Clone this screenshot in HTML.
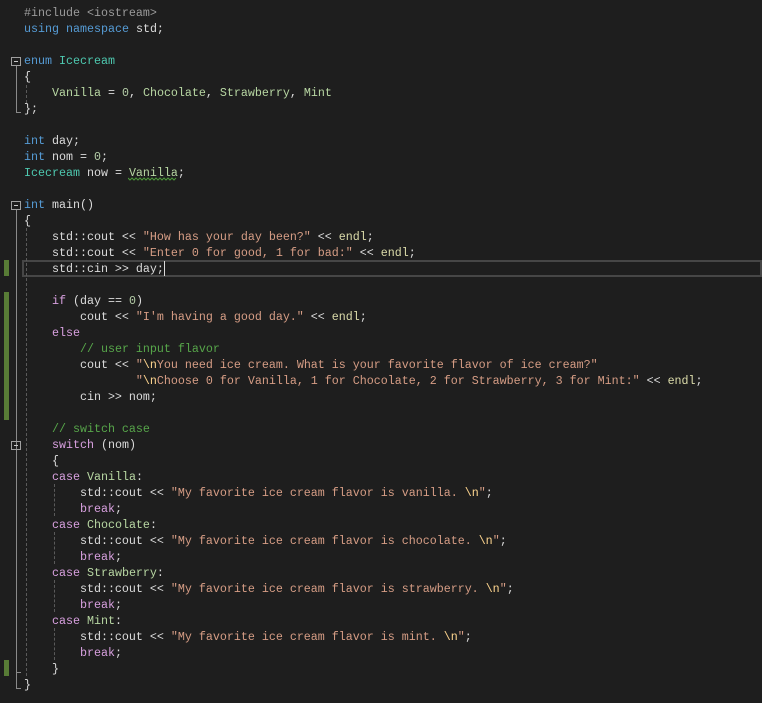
<!DOCTYPE html>
<html><head><meta charset="utf-8"><style>
html,body{margin:0;padding:0;background:#1e1e1e;width:762px;height:703px;overflow:hidden;position:relative}
.l{position:absolute;left:24px;height:16px;line-height:16px;white-space:pre;font-family:"Liberation Mono",monospace;font-size:11.67px;color:#dcdcdc;margin-top:1px}
.k{color:#569cd6}.t{color:#4ec9b0}.s{color:#d69d85}.c{color:#57a64a}.p{color:#d8a0df}.e{color:#b8d7a3}.n{color:#b5cea8}.g{color:#9b9b9b}.f{color:#dcdcaa}.x{color:#ffd68f}
.bar{position:absolute;left:4px;width:5px;background:#587c36}
.box{position:absolute;left:11px;width:10px;height:9px;border:1px solid #a0a0a0;box-sizing:border-box}
.box:after{content:"";position:absolute;left:2px;top:3px;width:4px;height:1px;background:#c8c8c8}
.vl{position:absolute;left:16px;width:1px;background:#8a8a8a}
.hk{position:absolute;left:16px;width:5px;height:1px;background:#8a8a8a}
.dg{position:absolute;width:0;border-left:1px dashed #5a5a5a}
</style></head><body>
<div style="position:absolute;left:22px;top:260px;width:740px;height:17px;border:2px solid #464646;box-sizing:border-box"></div>
<div class="bar" style="top:260px;height:16px"></div>
<div class="bar" style="top:292px;height:128px"></div>
<div class="bar" style="top:660px;height:16px"></div>

<div class="box" style="top:57px"></div><div class="vl" style="top:66px;height:46px"></div><div class="hk" style="top:112px"></div>
<div class="box" style="top:201px"></div><div class="vl" style="top:210px;height:478px"></div><div class="hk" style="top:688px"></div>
<div class="box" style="top:441px"></div><div class="vl" style="top:450px;height:223px"></div><div class="hk" style="top:672px"></div>
<div class="dg" style="left:26px;top:85px;height:18px"></div>
<div class="dg" style="left:26px;top:228px;height:448px"></div>
<div class="dg" style="left:54px;top:484px;height:32px"></div>
<div class="dg" style="left:54px;top:532px;height:32px"></div>
<div class="dg" style="left:54px;top:580px;height:32px"></div>
<div class="dg" style="left:54px;top:628px;height:32px"></div>
<div style="position:absolute;left:164px;top:261px;width:1px;height:15px;background:#dcdcdc"></div>
<svg style="position:absolute;left:128px;top:177px" width="50" height="4"><polyline points="0,1 2,3 4,1 6,3 8,1 10,3 12,1 14,3 16,1 18,3 20,1 22,3 24,1 26,3 28,1 30,3 32,1 34,3 36,1 38,3 40,1 42,3 44,1 46,3 48,1" fill="none" stroke="#4e9a3a" stroke-width="1"/></svg>

<div class="l" style="top:4px"><span class="g">#include &lt;iostream&gt;</span></div>
<div class="l" style="top:20px"><span class="k">using</span> <span class="k">namespace</span> std;</div>
<div class="l" style="top:52px"><span class="k">enum</span> <span class="t">Icecream</span></div>
<div class="l" style="top:68px">{</div>
<div class="l" style="top:84px">    <span class="e">Vanilla</span> = <span class="n">0</span>, <span class="e">Chocolate</span>, <span class="e">Strawberry</span>, <span class="e">Mint</span></div>
<div class="l" style="top:100px">};</div>
<div class="l" style="top:132px"><span class="k">int</span> day;</div>
<div class="l" style="top:148px"><span class="k">int</span> nom = <span class="n">0</span>;</div>
<div class="l" style="top:164px"><span class="t">Icecream</span> now = <span class="e">Vanilla</span>;</div>
<div class="l" style="top:196px"><span class="k">int</span> main()</div>
<div class="l" style="top:212px">{</div>
<div class="l" style="top:228px">    std::cout &lt;&lt; <span class="s">"How has your day been?"</span> &lt;&lt; <span class="f">endl</span>;</div>
<div class="l" style="top:244px">    std::cout &lt;&lt; <span class="s">"Enter 0 for good, 1 for bad:"</span> &lt;&lt; <span class="f">endl</span>;</div>
<div class="l" style="top:260px">    std::cin &gt;&gt; day;</div>
<div class="l" style="top:292px">    <span class="p">if</span> (day == <span class="n">0</span>)</div>
<div class="l" style="top:308px">        cout &lt;&lt; <span class="s">"I'm having a good day."</span> &lt;&lt; <span class="f">endl</span>;</div>
<div class="l" style="top:324px">    <span class="p">else</span></div>
<div class="l" style="top:340px">        <span class="c">// user input flavor</span></div>
<div class="l" style="top:356px">        cout &lt;&lt; <span class="s">"<span class="x">\n</span>You need ice cream. What is your favorite flavor of ice cream?"</span></div>
<div class="l" style="top:372px">                <span class="s">"<span class="x">\n</span>Choose 0 for Vanilla, 1 for Chocolate, 2 for Strawberry, 3 for Mint:"</span> &lt;&lt; <span class="f">endl</span>;</div>
<div class="l" style="top:388px">        cin &gt;&gt; nom;</div>
<div class="l" style="top:420px">    <span class="c">// switch case</span></div>
<div class="l" style="top:436px">    <span class="p">switch</span> (nom)</div>
<div class="l" style="top:452px">    {</div>
<div class="l" style="top:468px">    <span class="p">case</span> <span class="e">Vanilla</span>:</div>
<div class="l" style="top:484px">        std::cout &lt;&lt; <span class="s">"My favorite ice cream flavor is vanilla. <span class="x">\n</span>"</span>;</div>
<div class="l" style="top:500px">        <span class="p">break</span>;</div>
<div class="l" style="top:516px">    <span class="p">case</span> <span class="e">Chocolate</span>:</div>
<div class="l" style="top:532px">        std::cout &lt;&lt; <span class="s">"My favorite ice cream flavor is chocolate. <span class="x">\n</span>"</span>;</div>
<div class="l" style="top:548px">        <span class="p">break</span>;</div>
<div class="l" style="top:564px">    <span class="p">case</span> <span class="e">Strawberry</span>:</div>
<div class="l" style="top:580px">        std::cout &lt;&lt; <span class="s">"My favorite ice cream flavor is strawberry. <span class="x">\n</span>"</span>;</div>
<div class="l" style="top:596px">        <span class="p">break</span>;</div>
<div class="l" style="top:612px">    <span class="p">case</span> <span class="e">Mint</span>:</div>
<div class="l" style="top:628px">        std::cout &lt;&lt; <span class="s">"My favorite ice cream flavor is mint. <span class="x">\n</span>"</span>;</div>
<div class="l" style="top:644px">        <span class="p">break</span>;</div>
<div class="l" style="top:660px">    }</div>
<div class="l" style="top:676px">}</div>
</body></html>
